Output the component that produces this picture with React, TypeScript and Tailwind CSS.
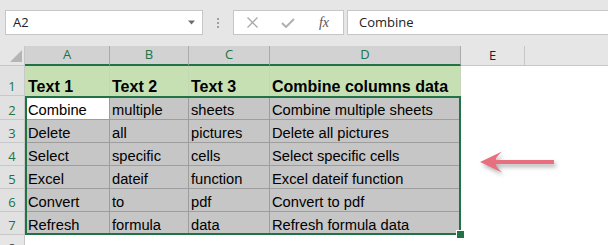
import React from 'react';

const data = [
  ['Combine', 'multiple', 'sheets', 'Combine multiple sheets'],
  ['Delete', 'all', 'pictures', 'Delete all pictures'],
  ['Select', 'specific', 'cells', 'Select specific cells'],
  ['Excel', 'dateif', 'function', 'Excel dateif function'],
  ['Convert', 'to', 'pdf', 'Convert to pdf'],
  ['Refresh', 'formula', 'data', 'Refresh formula data'],
];
const heads = ['Text 1', 'Text 2', 'Text 3', 'Combine columns data'];
const pads = ['pl-[3px]', 'pl-[2px]', 'pl-[2px]', 'pl-[2px]'];

function RowHead({ n, dim }: { n: number; dim?: boolean }) {
  return (
    <div
      className={`flex items-end justify-center border-r border-b border-[#c8c8c8] font-['Open_Sans',sans-serif] text-[13px] leading-[17px] ${
        dim ? 'bg-[#e6e6e6] text-[#444]' : 'bg-[#e1e1e1] text-[#217346]'
      }`}
    >
      {n}
    </div>
  );
}

export default function App() {
  return (
    <div className="relative w-[608px] h-[245px] overflow-hidden bg-white font-['Liberation_Sans',Arial,sans-serif]">
      {/* toolbar */}
      <div className="flex h-[46px] items-start bg-[#e6e6e6] pt-[10px]">
        <div className="ml-[5px] flex h-[25px] w-[198px] items-center justify-between border border-[#c6c6c6] bg-white pl-[7px] pr-[6px] font-['Open_Sans',sans-serif] text-[13px] text-[#222]">
          <span>A2</span>
          <svg width="8" height="5" viewBox="0 0 8 5">
            <polygon points="0,0.5 7,0.5 3.5,4.5" fill="#6d6d6d" />
          </svg>
        </div>
        <div className="flex h-[25px] w-[30px] flex-col items-center justify-center gap-[2px]">
          <div className="h-[2px] w-[2px] bg-[#a0a0a0]" />
          <div className="h-[2px] w-[2px] bg-[#a0a0a0]" />
          <div className="h-[2px] w-[2px] bg-[#a0a0a0]" />
        </div>
        <div className="flex h-[25px] w-[111px] items-center border border-[#c6c6c6] bg-white">
          <div className="flex w-[36px] items-center justify-center">
            <svg width="11" height="11" viewBox="0 0 11 11">
              <path d="M0.5 0.5 L10.5 10.5 M10.5 0.5 L0.5 10.5" stroke="#a8a8a8" strokeWidth="1.3" />
            </svg>
          </div>
          <div className="flex w-[36px] items-center justify-center">
            <svg width="14" height="10" viewBox="0 0 14 10">
              <path d="M1 5 L5 9 L13 1" stroke="#b0b0b0" strokeWidth="2" fill="none" />
            </svg>
          </div>
          <div className="flex w-[36px] items-center justify-center font-['Liberation_Serif',serif] text-[14px] italic leading-none text-[#555]">
            fx
          </div>
        </div>
        <div className="ml-[3px] flex h-[25px] flex-1 items-center border border-r-0 border-[#c6c6c6] bg-white pl-[11px] font-['Open_Sans',sans-serif] text-[13px] text-[#222]">
          Combine
        </div>
      </div>

      {/* sheet */}
      <div className="grid grid-cols-[25px_85px_79px_81px_191px_64px_1fr] grid-rows-[20px_30px_24px_23px_23px_23px_23px_23px_23px]">
        {/* header row */}
        <div className="relative border-r border-b border-[#c6c6c6] bg-[#e6e6e6]">
          <svg className="absolute left-0 top-0" width="24" height="19" viewBox="0 0 24 19">
            <polygon points="10,16 22,16 22,4" fill="#b5b5b5" />
          </svg>
        </div>
        {['A', 'B', 'C', 'D'].map((c) => (
          <div
            key={c}
            className="flex items-center justify-center border-r border-b-2 border-r-[#ababab] border-b-[#217346] bg-[#d2d2d2] font-['Open_Sans',sans-serif] text-[13px] text-[#217346]"
          >
            {c}
          </div>
        ))}
        <div className="flex items-center justify-center border-r border-b border-[#c6c6c6] bg-[#e6e6e6] font-['Open_Sans',sans-serif] text-[13px] text-[#222]">
          E
        </div>
        <div className="border-b border-[#c6c6c6] bg-[#e6e6e6]" />

        {/* row 1 */}
        <RowHead n={1} />
        {heads.map((h, i) => (
          <div
            key={h}
            className={`flex items-end border-r border-[#c5d5b8] bg-[#c6e0b4] ${pads[i]} text-[16px] font-bold leading-[18px] text-black whitespace-nowrap`}
          >
            {h}
          </div>
        ))}
        <div className="bg-white" />
        <div className="bg-white" />

        {/* data rows */}
        {data.map((row, r) => (
          <React.Fragment key={r}>
            <RowHead n={r + 2} />
            {row.map((t, i) => (
              <div
                key={i}
                className={`flex items-end border-r border-b border-[#9d9d9d] ${
                  r === 0 && i === 0 ? 'bg-white' : 'bg-[#c6c6c6]'
                } ${pads[i]} text-[14.7px] leading-[17px] text-black whitespace-nowrap`}
              >
                {t}
              </div>
            ))}
            <div className="bg-white" />
            <div className="bg-white" />
          </React.Fragment>
        ))}

        {/* row 8 */}
        <RowHead n={8} dim />
        <div className="bg-white" />
        <div className="bg-white" />
        <div className="bg-white" />
        <div className="bg-white" />
        <div className="bg-white" />
        <div className="bg-white" />
      </div>

      {/* selection border overlay */}
      <div className="pointer-events-none absolute left-[25px] top-[96px] h-[139px] w-[436px] border-2 border-[#217346]" />
      {/* fill handle */}
      <div className="absolute left-[456px] top-[230px] h-[8px] w-[8px] border-l border-t border-white bg-[#217346]" />

      {/* arrow annotation */}
      <svg
        className="absolute left-[470px] top-[145px] drop-shadow-[2px_3px_2px_rgba(0,0,0,0.3)]"
        width="95"
        height="35"
        viewBox="0 0 95 35"
      >
        <path
          d="M10 17 L32 6.5 Q25 13 26 15 L84 15 L84 19 L26 19 Q25 21 32 27.5 Z"
          fill="#e8707e"
        />
      </svg>
    </div>
  );
}
